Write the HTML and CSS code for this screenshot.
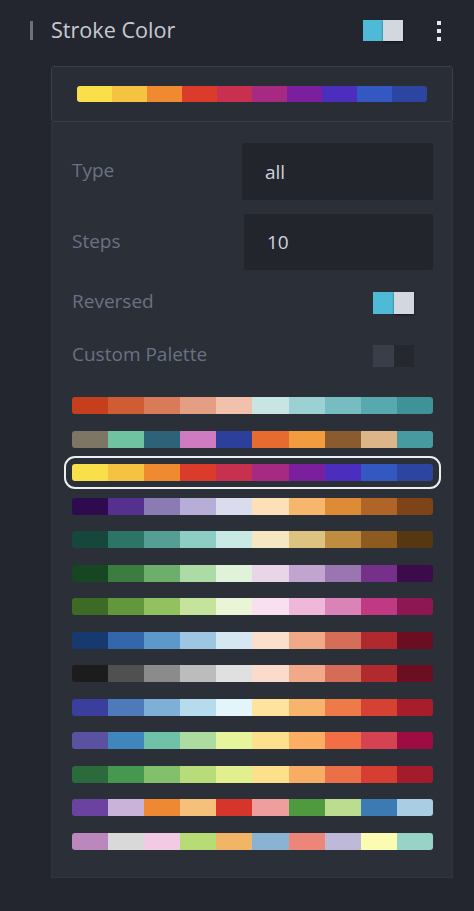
FILE: index.html
```html
<!DOCTYPE html>
<html>
<head>
<meta charset="utf-8">
<link rel="stylesheet" href="styles.css">
</head>
<body>
<div class="header">
  <div class="header-bar"></div>
  <div class="title">Stroke Color</div>
  <div class="spacer"></div>
  <div class="toggle on header-toggle"><div class="knob"></div></div>
  <div class="kebab"><span></span><span></span><span></span></div>
</div>

<div class="panel">
  <div class="preview">
    <div class="palette">
      <i style="background:#f9e04b"></i><i style="background:#f5c242"></i><i style="background:#ef8a30"></i><i style="background:#db3b2b"></i><i style="background:#c7304f"></i><i style="background:#a72a82"></i><i style="background:#7b1f9f"></i><i style="background:#4b2ebd"></i><i style="background:#3358c2"></i><i style="background:#2c45a0"></i>
    </div>
  </div>
  <div class="dropdown">
    <div class="field field-type">
      <div class="label">Type</div>
      <div class="input input-type">all</div>
    </div>
    <div class="field field-steps">
      <div class="label">Steps</div>
      <div class="input input-steps">10</div>
    </div>
    <div class="field field-reversed">
      <div class="label">Reversed</div>
      <div class="toggle on form-toggle"><div class="knob"></div></div>
    </div>
    <div class="field field-custom">
      <div class="label">Custom Palette</div>
      <div class="toggle off form-toggle"><div class="knob"></div></div>
    </div>

    <div class="palettes">
      <div class="palette"><i style="background:#c63f1d"></i><i style="background:#cf5c35"></i><i style="background:#d97b58"></i><i style="background:#e49e83"></i><i style="background:#f2c1ab"></i><i style="background:#c9e5e3"></i><i style="background:#9cd1d4"></i><i style="background:#77bcc1"></i><i style="background:#58a9ae"></i><i style="background:#3f9299"></i></div>
      <div class="palette"><i style="background:#7e7664"></i><i style="background:#70c3a1"></i><i style="background:#2d6279"></i><i style="background:#cf7bc2"></i><i style="background:#2c3f9b"></i><i style="background:#e76a2f"></i><i style="background:#f29b3f"></i><i style="background:#8a5b2f"></i><i style="background:#dcb589"></i><i style="background:#479a9f"></i></div>
      <div class="palette selected"><i style="background:#f9e04b"></i><i style="background:#f5c242"></i><i style="background:#ef8a30"></i><i style="background:#db3b2b"></i><i style="background:#c7304f"></i><i style="background:#a72a82"></i><i style="background:#7b1f9f"></i><i style="background:#4b2ebd"></i><i style="background:#3358c2"></i><i style="background:#2c45a0"></i></div>
      <div class="palette"><i style="background:#2e0b4f"></i><i style="background:#56308f"></i><i style="background:#8a7bb2"></i><i style="background:#b6aed6"></i><i style="background:#dadbec"></i><i style="background:#fde0b7"></i><i style="background:#f6b66c"></i><i style="background:#dd8b34"></i><i style="background:#b06427"></i><i style="background:#7e4316"></i></div>
      <div class="palette"><i style="background:#16473b"></i><i style="background:#2c7466"></i><i style="background:#549e94"></i><i style="background:#8ecdc3"></i><i style="background:#c9e9e5"></i><i style="background:#f5e7c2"></i><i style="background:#dcc37f"></i><i style="background:#c08c40"></i><i style="background:#8d5a1f"></i><i style="background:#553712"></i></div>
      <div class="palette"><i style="background:#174622"></i><i style="background:#3b7d3e"></i><i style="background:#6cae6a"></i><i style="background:#acdba6"></i><i style="background:#e1f2da"></i><i style="background:#e8d5e8"></i><i style="background:#c1a4d0"></i><i style="background:#9976b0"></i><i style="background:#753189"></i><i style="background:#3c0b4a"></i></div>
      <div class="palette"><i style="background:#3d6b25"></i><i style="background:#62973b"></i><i style="background:#92c160"></i><i style="background:#c6e39d"></i><i style="background:#eaf5d7"></i><i style="background:#f9e0ee"></i><i style="background:#efb7d9"></i><i style="background:#da83b8"></i><i style="background:#c03a83"></i><i style="background:#8c1753"></i></div>
      <div class="palette"><i style="background:#163a70"></i><i style="background:#3366ab"></i><i style="background:#5d98cb"></i><i style="background:#9cc6e1"></i><i style="background:#d5e7f1"></i><i style="background:#fbdfcd"></i><i style="background:#f1aa88"></i><i style="background:#d56d59"></i><i style="background:#b0292e"></i><i style="background:#6b0e21"></i></div>
      <div class="palette"><i style="background:#1c1c1c"></i><i style="background:#505050"></i><i style="background:#8b8b8b"></i><i style="background:#bcbcbc"></i><i style="background:#e0e0e0"></i><i style="background:#fbdbcb"></i><i style="background:#f2a98a"></i><i style="background:#d56c58"></i><i style="background:#b12a2e"></i><i style="background:#6b0e21"></i></div>
      <div class="palette"><i style="background:#3a3f9e"></i><i style="background:#4e79bb"></i><i style="background:#7eafd6"></i><i style="background:#b5dbec"></i><i style="background:#e3f4fa"></i><i style="background:#fde39b"></i><i style="background:#f8b36d"></i><i style="background:#ee7a4a"></i><i style="background:#d54133"></i><i style="background:#a81d2b"></i></div>
      <div class="palette"><i style="background:#5b51a1"></i><i style="background:#3e86bb"></i><i style="background:#6fc1a7"></i><i style="background:#acdc9f"></i><i style="background:#e6f59b"></i><i style="background:#fde08b"></i><i style="background:#fcae63"></i><i style="background:#f36d45"></i><i style="background:#d54251"></i><i style="background:#9d0d42"></i></div>
      <div class="palette"><i style="background:#2a6a3b"></i><i style="background:#47984f"></i><i style="background:#82c06c"></i><i style="background:#b8dc79"></i><i style="background:#e2ef8e"></i><i style="background:#fce08c"></i><i style="background:#f7ae64"></i><i style="background:#eb7048"></i><i style="background:#d63e31"></i><i style="background:#a41c2b"></i></div>
      <div class="palette"><i style="background:#6c42a0"></i><i style="background:#c9b3d8"></i><i style="background:#ee8833"></i><i style="background:#f5c07a"></i><i style="background:#d6352b"></i><i style="background:#ee9e9c"></i><i style="background:#4f9a3f"></i><i style="background:#badd8f"></i><i style="background:#3c7ab4"></i><i style="background:#a9cee4"></i></div>
      <div class="palette"><i style="background:#bb87bd"></i><i style="background:#d9d9d9"></i><i style="background:#f3cae4"></i><i style="background:#b7dc75"></i><i style="background:#f2b567"></i><i style="background:#89b2d3"></i><i style="background:#ec8678"></i><i style="background:#beb9d9"></i><i style="background:#fbfbb1"></i><i style="background:#98d3c7"></i></div>
    </div>
  </div>
</div>
</body>
</html>
```
FILE: styles.css
```css
* { box-sizing: border-box; }
html, body {
  margin: 0;
  padding: 0;
  background: #23262e;
  font-family: "Open Sans", "Noto Sans", sans-serif;
}
body {
  width: 474px;
  height: 911px;
  overflow: hidden;
}

.header {
  display: flex;
  align-items: center;
  height: 21px;
  margin-top: 20px;
  padding: 0 33px 0 30px;
}
.header-bar {
  width: 3px;
  height: 19px;
  background: #6b7180;
  margin-right: 18px;
}
.title {
  font-size: 21.6px;
  line-height: 21px;
  color: #c6cad2;
  margin-top: -3px;
}
.spacer { flex: 1; }

.toggle {
  position: relative;
  display: flex;
  flex-shrink: 0;
}
.toggle .knob {
  width: 50%;
  height: 100%;
}
.toggle.on {
  background: #4ebad5;
  justify-content: flex-end;
}
.toggle.on .knob {
  background: #d3d7df;
  box-shadow: 0 1px 2px rgba(0,0,0,0.5);
}
.toggle.off {
  background: #25282f;
  justify-content: flex-start;
}
.toggle.off .knob {
  background: #3a3e48;
}
.header-toggle {
  width: 40px;
  height: 21px;
  margin-right: 34px;
}
.kebab {
  display: flex;
  flex-direction: column;
  gap: 4px;
}
.kebab span {
  display: block;
  width: 4px;
  height: 4px;
  background: #e6e8ec;
}

.panel {
  margin: 25px 0 0 51px;
  width: 402px;
}
.preview {
  height: 56px;
  border: 1px solid #3a3f4a;
  border-radius: 3px;
  background: #292d36;
  padding: 19px 25px;
}
.dropdown {
  background: #2a2f38;
  border: 1px solid #30343e;
  border-top: none;
  padding: 21px 19px 27px 20px;
}

.palette {
  display: flex;
  height: 17px;
  border-radius: 3px;
  overflow: hidden;
}
.preview .palette { height: 16px; }
.palette i {
  flex: 1;
  display: block;
}

.field {
  display: flex;
  align-items: center;
  justify-content: space-between;
}
.label {
  font-size: 19px;
  color: #6a7282;
  line-height: 24px;
}
.input {
  height: 100%;
  background: #22252c;
  border-radius: 2px;
  font-size: 19px;
  color: #d0d4dc;
  display: flex;
  align-items: center;
  padding-left: 23px;
}
.field-type { height: 57px; }
.field-type .label { margin-top: -3px; }
.input-type { width: 191px; }
.field-steps { margin-top: 14px; height: 56px; }
.field-steps .label { margin-top: -3px; }
.input-steps { width: 189px; }
.field-reversed { margin-top: 22px; height: 22px; }
.field-custom { margin-top: 31px; height: 22px; }
.form-toggle {
  width: 41px;
  height: 22px;
  margin-right: 19px;
}
.field-reversed .label { margin-top: -5px; }
.field-custom .label { margin-top: -4px; }

.palettes {
  margin-top: 30px;
  display: flex;
  flex-direction: column;
  gap: 16.54px;
}
.palette.selected {
  overflow: visible;
  outline: 2px solid #eceef0;
  outline-offset: 6px;
}
.palette.selected i:first-child { border-radius: 3px 0 0 3px; }
.palette.selected i:last-child { border-radius: 0 3px 3px 0; }
```
